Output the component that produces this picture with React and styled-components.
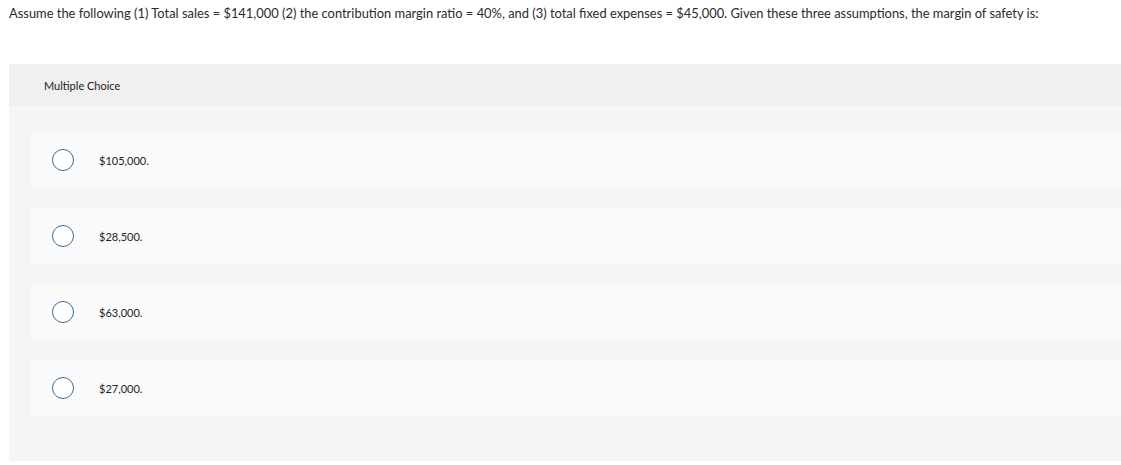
import React from "react";
import styled, { createGlobalStyle } from "styled-components";

const Global = createGlobalStyle`
  html, body { margin: 0; padding: 0; background: #fff; overflow: hidden; }
  body { font-family: "Lato", "Open Sans", sans-serif; color: #222; }
`;

const Page = styled.div`
  width: 1121px;
  height: 465px;
  padding-left: 9px;
  box-sizing: border-box;
  overflow: hidden;
`;

const Question = styled.p`
  margin: 0;
  padding-top: 6px;
  height: 64px;
  box-sizing: border-box;
  font-size: 12.9px;
  line-height: 15px;
  color: #2b2b2b;
  white-space: nowrap;
`;

const Panel = styled.section`
  background: #f5f5f5;
  display: flex;
  flex-direction: column;
`;

const PanelHeader = styled.div`
  height: 42px;
  background: #f0f0f0;
  display: flex;
  align-items: center;
  padding-left: 35px;
  font-size: 11px;
  color: #222;
`;

const Options = styled.div`
  display: flex;
  flex-direction: column;
  gap: 20px;
  padding: 26px 0 45px 22px;
`;

const Option = styled.label`
  height: 56px;
  background: #fafafa;
  display: flex;
  align-items: center;
  padding-left: 21px;
  font-size: 11px;
  color: #222;
  cursor: pointer;
`;

const Radio = styled.span`
  width: 20px;
  height: 20px;
  border: 1.5px solid #3b6a9b;
  border-radius: 50%;
  background: #fff;
  flex: none;
  margin-right: 25px;
`;

const options = ["$105,000.", "$28,500.", "$63,000.", "$27,000."];

export default function App() {
  return (
    <>
      <Global />
      <Page>
        <Question>
          Assume the following (1) Total sales = $141,000 (2) the contribution margin ratio = 40%, and (3) total fixed expenses = $45,000. Given these three assumptions, the margin of safety is:
        </Question>
        <Panel>
          <PanelHeader>Multiple Choice</PanelHeader>
          <Options>
            {options.map((o) => (
              <Option key={o}>
                <Radio />
                {o}
              </Option>
            ))}
          </Options>
        </Panel>
      </Page>
    </>
  );
}
